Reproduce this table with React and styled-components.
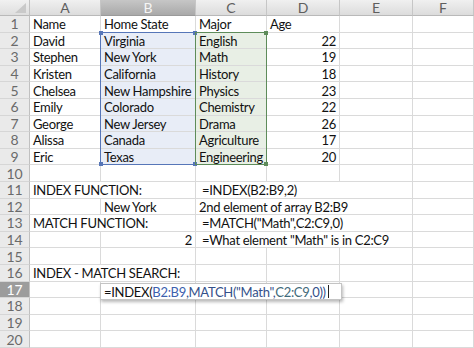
import React from 'react'
import styled, { createGlobalStyle, css } from 'styled-components'

const GlobalStyle = createGlobalStyle`
  html, body {
    margin: 0;
    padding: 0;
    background: #ffffff;
    overflow: hidden;
  }
`

const LETTERS = ['A', 'B', 'C', 'D', 'E', 'F']
const ROW_COUNT = 20
const ACTIVE_COL = 2
const ACTIVE_ROW = 17

// sheet contents: [row, col, text, options]
const people = [
  ['Name', 'Home State', 'Major', 'Age'],
  ['David', 'Virginia', 'English', 22],
  ['Stephen', 'New York', 'Math', 19],
  ['Kristen', 'California', 'History', 18],
  ['Chelsea', 'New Hampshire', 'Physics', 23],
  ['Emily', 'Colorado', 'Chemistry', 22],
  ['George', 'New Jersey', 'Drama', 26],
  ['Alissa', 'Canada', 'Agriculture', 17],
  ['Eric', 'Texas', 'Engineering', 20],
]

const entries = []
people.forEach((r, i) => {
  r.forEach((v, c) => {
    entries.push({ row: i + 1, col: c + 1, text: v, align: typeof v === 'number' ? 'right' : 'left' })
  })
})
entries.push(
  { row: 11, col: 1, text: 'INDEX FUNCTION:', span: 2 },
  { row: 11, col: 3, text: '\u00a0=INDEX(B2:B9,2)', span: 3 },
  { row: 12, col: 2, text: 'New York' },
  { row: 12, col: 3, text: '2nd element of array B2:B9', span: 3 },
  { row: 13, col: 1, text: 'MATCH FUNCTION:', span: 2 },
  { row: 13, col: 3, text: '\u00a0=MATCH("Math",C2:C9,0)', span: 3 },
  { row: 14, col: 2, text: '2', align: 'right' },
  { row: 14, col: 3, text: '\u00a0=What element "Math" is in C2:C9', span: 3 },
  { row: 16, col: 1, text: 'INDEX - MATCH SEARCH:', span: 2 },
)

const fillFor = (row, col) => {
  if (row >= 2 && row <= 9 && col === 2) return 'blue'
  if (row >= 2 && row <= 9 && col === 3) return 'green'
  return null
}

const fills = {
  blue: '#e8edf7',
  green: '#e8efe5',
}

const Sheet = styled.div`
  display: grid;
  grid-template-columns: 30px 71px 95px 71px 73px 73px 1fr;
  grid-template-rows: 16px repeat(${ROW_COUNT}, 16.6px);
  width: 474px;
  height: 348px;
  font-family: Lato, "Open Sans", sans-serif;
  overflow: hidden;
`

const Corner = styled.div`
  grid-column: 1;
  grid-row: 1;
  position: relative;
  background: linear-gradient(#f1f1f1, #dedede);
  border-right: 1px solid #c2c2c2;
  border-bottom: 1px solid #b9b9b9;

  &::after {
    content: '';
    position: absolute;
    right: 3px;
    bottom: 2px;
    width: 11px;
    height: 10px;
    background: #c9c9c9;
    clip-path: polygon(100% 0, 100% 100%, 0 100%);
  }
`

const ColHead = styled.div`
  grid-row: 1;
  grid-column: ${p => p.$col + 1};
  display: flex;
  align-items: center;
  justify-content: center;
  font-size: 14px;
  color: #5e5e5e;
  background: linear-gradient(#f0f0f0, #dcdcdc);
  border-right: 1px solid #c6c6c6;
  border-bottom: 1px solid #b9b9b9;

  ${p => p.$active && css`
    background: linear-gradient(#c6c6c6, #a9a9a9);
    color: #f5f5f5;
    border-bottom-color: #9a9a9a;
  `}
`

const RowHead = styled.div`
  grid-column: 1;
  grid-row: ${p => p.$row + 1};
  display: flex;
  align-items: center;
  justify-content: center;
  font-size: 14px;
  color: #6a6a6a;
  background: #eaeaea;
  border-right: 1px solid #c0c0c0;
  border-bottom: 1px solid #d6d6d6;

  ${p => p.$active && css`
    background: #9c9c9c;
    color: #ffffff;
  `}
`

const Cell = styled.div`
  grid-row: ${p => p.$row + 1};
  grid-column: ${p => p.$col + 1} / span ${p => p.$span || 1};
  display: flex;
  align-items: center;
  justify-content: ${p => (p.$align === 'right' ? 'flex-end' : 'flex-start')};
  padding: 1px 3px 0 3px;
  font-size: 13px;
  letter-spacing: -0.3px;
  color: #111111;
  white-space: nowrap;
  overflow: visible;
  background: ${p => (p.$fill ? fills[p.$fill] : '#ffffff')};
  border-right: 1px solid #dadada;
  border-bottom: 1px solid #dadada;
  min-width: 0;
`

const tones = {
  blue: '#5676b8',
  green: '#5e8c5a',
}

const RangeBox = styled.div`
  grid-column: ${p => p.$col + 1};
  grid-row: 3 / 11;
  position: relative;
  margin: -1px 0 0 -1px;
  border: 1px solid ${p => tones[p.$tone]};
  pointer-events: none;
  z-index: 2;
`

const Handle = styled.span`
  position: absolute;
  width: 4px;
  height: 4px;
  background: ${p => tones[p.$tone]};
  ${p => (p.$top ? 'top: -2px;' : 'bottom: -2px;')}
  ${p => (p.$left ? 'left: -2px;' : 'right: -2px;')}
`

const Editor = styled.div`
  grid-column: 3 / 6;
  grid-row: ${ACTIVE_ROW + 1};
  z-index: 3;
  display: flex;
  align-items: center;
  margin: 1px -2px -2px -1px;
  padding: 1px 3px 0;
  background: #ffffff;
  border: 1px solid #c4c4c4;
  box-shadow: 1px 2px 3px rgba(0, 0, 0, 0.28);
  font-size: 13px;
  letter-spacing: -0.3px;
  color: #111111;
  white-space: nowrap;
`

const Ref = styled.span`
  color: ${p => p.$color || '#34508a'};
`

const Caret = styled.span`
  display: inline-block;
  width: 1px;
  height: 13px;
  margin-left: 2px;
  background: #222;
`

export default function App() {
  const lookup = {}
  const covered = {}
  entries.forEach(e => {
    lookup[`${e.row}-${e.col}`] = e
    for (let k = 1; k < (e.span || 1); k++) covered[`${e.row}-${e.col + k}`] = true
  })

  const cells = []
  for (let r = 1; r <= ROW_COUNT; r++) {
    for (let c = 1; c <= LETTERS.length; c++) {
      const key = `${r}-${c}`
      if (covered[key]) continue
      const e = lookup[key]
      cells.push(
        <Cell
          key={key}
          $row={r}
          $col={c}
          $span={e?.span}
          $align={e?.align}
          $fill={fillFor(r, c)}
        >
          {e ? e.text : ''}
        </Cell>
      )
    }
  }

  return (
    <>
      <GlobalStyle />
      <Sheet>
        <Corner />
        {LETTERS.map((l, i) => (
          <ColHead key={l} $col={i + 1} $active={i + 1 === ACTIVE_COL}>{l}</ColHead>
        ))}
        {Array.from({ length: ROW_COUNT }, (_, i) => (
          <RowHead key={i} $row={i + 1} $active={i + 1 === ACTIVE_ROW}>{i + 1}</RowHead>
        ))}
        {cells}

        <RangeBox $col={2} $tone="blue">
          <Handle $tone="blue" $top $left />
          <Handle $tone="blue" $top />
          <Handle $tone="blue" $left />
          <Handle $tone="blue" />
        </RangeBox>
        <RangeBox $col={3} $tone="green">
          <Handle $tone="green" $top />
          <Handle $tone="green" />
        </RangeBox>

        <Editor>
          =INDEX(<Ref $color="#3d5fae">B2:B9</Ref><Ref>,MATCH("Math",</Ref><Ref $color="#3f6a7a">C2:C9</Ref><Ref>,0))</Ref>
          <Caret />
        </Editor>
      </Sheet>
    </>
  )
}
